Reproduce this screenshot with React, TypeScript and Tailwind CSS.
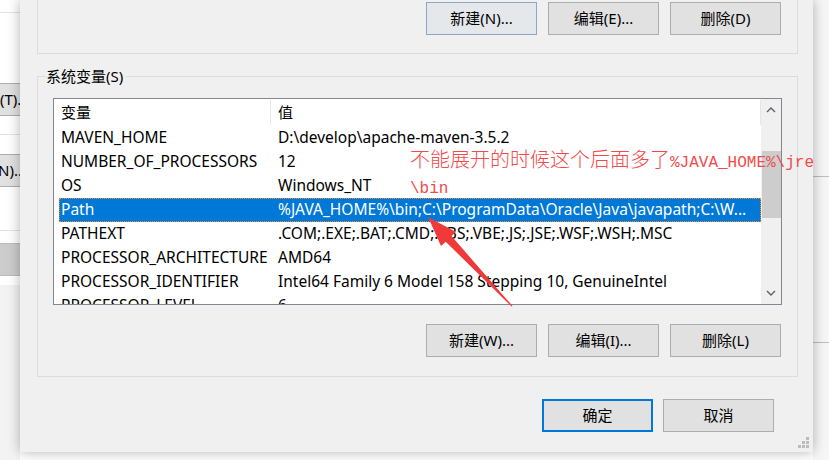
import React from "react";

const rows: [string, string][] = [
  ["MAVEN_HOME", "D:\\develop\\apache-maven-3.5.2"],
  ["NUMBER_OF_PROCESSORS", "12"],
  ["OS", "Windows_NT"],
  ["Path", "%JAVA_HOME%\\bin;C:\\ProgramData\\Oracle\\Java\\javapath;C:\\W..."],
  ["PATHEXT", ".COM;.EXE;.BAT;.CMD;.VBS;.VBE;.JS;.JSE;.WSF;.WSH;.MSC"],
  ["PROCESSOR_ARCHITECTURE", "AMD64"],
  ["PROCESSOR_IDENTIFIER", "Intel64 Family 6 Model 158 Stepping 10, GenuineIntel"],
  ["PROCESSOR_LEVEL", "6"],
];

function Btn({ label, kind = "normal" }: { label: string; kind?: "normal" | "hover" | "default" }) {
  const look =
    kind === "hover"
      ? "border border-[#8ea6c4] bg-[#e5e8eb]"
      : kind === "default"
      ? "border-2 border-[#0078d7] bg-[#e1e1e1]"
      : "border border-[#adadad] bg-[#e1e1e1]";
  return (
    <div className={`flex h-[33px] w-[111px] items-center justify-center text-[15px] text-black ${look}`}>
      {label}
    </div>
  );
}

function Chevron({ up }: { up?: boolean }) {
  return (
    <svg width="10" height="6" viewBox="0 0 10 6">
      <path
        d={up ? "M1 5 L5 1 L9 5" : "M1 1 L5 5 L9 1"}
        fill="none"
        stroke="#606060"
        strokeWidth="1.4"
      />
    </svg>
  );
}

function VarList() {
  return (
    <div className="flex h-[207px] w-[729px] overflow-hidden border border-[#828790] bg-white text-[15.5px]">
      <div className="flex-1 overflow-hidden pl-[5px]">
        <div className="flex h-[27px] items-center text-[15px]">
          <div className="h-[25px] w-[212px] border-r border-[#e5e5e5] pl-[2px] leading-[25px]">变量</div>
          <div className="h-[25px] flex-1 border-r border-[#e5e5e5] pl-[7px] leading-[25px]">值</div>
        </div>
        {rows.map(([name, value]) => {
          const sel = name === "Path";
          return (
            <div
              key={name}
              className={
                sel
                  ? "flex h-[24px] items-center whitespace-nowrap bg-[#0078d7] text-white outline-1 -outline-offset-1 outline-dotted outline-[#ff8728]"
                  : "flex h-[24px] items-center whitespace-nowrap text-black"
              }
            >
              <div className="w-[212px] overflow-hidden pl-[2px]">{name}</div>
              <div className="flex-1 overflow-hidden pl-[7px]">{value}</div>
            </div>
          );
        })}
      </div>
      <div className="flex w-[20px] flex-col items-center bg-[#f0f0f0]">
        <div className="flex h-[22px] items-center">
          <Chevron up />
        </div>
        <div className="mt-[30px] h-[67px] w-[19px] bg-[#cdcdcd]" />
        <div className="flex-1" />
        <div className="flex h-[22px] items-center">
          <Chevron />
        </div>
      </div>
    </div>
  );
}

export default function App() {
  return (
    <div className="relative flex h-[460px] w-[829px] overflow-hidden bg-white font-['Noto_Sans','Noto_Sans_CJK_SC',sans-serif] text-[15px] text-black">
      {/* window behind, left */}
      <div className="flex w-[20px] shrink-0 flex-col overflow-hidden">
        <div className="h-[285px] bg-white">
          <div className="mt-[12px] h-px bg-[#e3e3e3]" />
          <div className="mt-[70px] flex h-[33px] w-[40px] items-center whitespace-nowrap border-y border-[#adadad] bg-[#e1e1e1]">
            (T)...
          </div>
          <div className="mt-[18px] h-px bg-[#e3e3e3]" />
          <div className="mt-[19px] flex h-[33px] w-[40px] items-center whitespace-nowrap border-y border-[#adadad] bg-[#e1e1e1]">
            <span className="-ml-[2px]">N)...</span>
          </div>
          <div className="mt-[43px] h-px bg-[#e3e3e3]" />
          <div className="mt-[12px] h-[33px] border-y border-[#bcbcbc] bg-[#cccccc]" />
        </div>
        <div className="flex-1 bg-[#f3f3f3]" />
      </div>

      {/* dialog */}
      <div className="relative z-10 flex h-[452px] w-[793px] shrink-0 flex-col bg-[#f0f0f0] shadow-[0_0_12px_rgba(0,0,0,0.3)]">
        <div className="ml-[17px] flex h-[54px] w-[761px] justify-end gap-[11px] border-x border-b border-[#dcdcdc] pr-[16px] pt-[2px]">
          <Btn label="新建(N)..." kind="hover" />
          <Btn label="编辑(E)..." />
          <Btn label="删除(D)" />
        </div>

        <fieldset className="ml-[17px] mt-[12px] w-[761px] border border-[#dcdcdc] px-[15px] pb-[19px] pt-[12px]">
          <legend className="ml-[-7px] pr-[3px] leading-[20px]">系统变量(S)</legend>
          <VarList />
          <div className="mt-[19px] flex justify-end gap-[11px] pr-[1px]">
            <Btn label="新建(W)..." />
            <Btn label="编辑(I)..." />
            <Btn label="删除(L)" />
          </div>
        </fieldset>

        <div className="mt-[22px] flex justify-end gap-[10px] pr-[39px]">
          <Btn label="确定" kind="default" />
          <Btn label="取消" />
        </div>

        <svg className="absolute bottom-[3px] right-[3px]" width="12" height="12" viewBox="0 0 12 12">
          <rect x="8" y="0" width="3" height="3" fill="#bcbcbc" />
          <rect x="4" y="4" width="3" height="3" fill="#bcbcbc" />
          <rect x="8" y="4" width="3" height="3" fill="#bcbcbc" />
          <rect x="0" y="8" width="3" height="3" fill="#bcbcbc" />
          <rect x="4" y="8" width="3" height="3" fill="#bcbcbc" />
          <rect x="8" y="8" width="3" height="3" fill="#bcbcbc" />
        </svg>
      </div>

      {/* window behind, right */}
      <div className="flex flex-1 flex-col bg-[#f6f6f6]">
        <div className="mt-[176px] h-px bg-[#bdbdbd]" />
        <div className="mt-[165px] h-px bg-[#bdbdbd]" />
      </div>

      {/* annotation */}
      <div className="pointer-events-none absolute left-[410px] top-[146px] z-20 whitespace-nowrap leading-[26px] text-[#f24a4a]">
        <div>
          <span className="font-['Noto_Sans_CJK_SC',sans-serif] text-[20px] font-light">不能展开的时候这个后面多了</span>
          <span className="font-['Liberation_Mono',monospace] text-[16px]">{"%JAVA_HOME%\\jre"}</span>
        </div>
        <div className="font-['Liberation_Mono',monospace] text-[16px]">{"\\bin"}</div>
      </div>
      <svg className="pointer-events-none absolute inset-0 z-20" width="829" height="460" viewBox="0 0 829 460">
        <polygon
          points="428,217 456,232 451.5,236.1 512.5,306 511.5,306.5 445.7,241.7 441,246"
          fill="#f03a3a"
        />
      </svg>
    </div>
  );
}
